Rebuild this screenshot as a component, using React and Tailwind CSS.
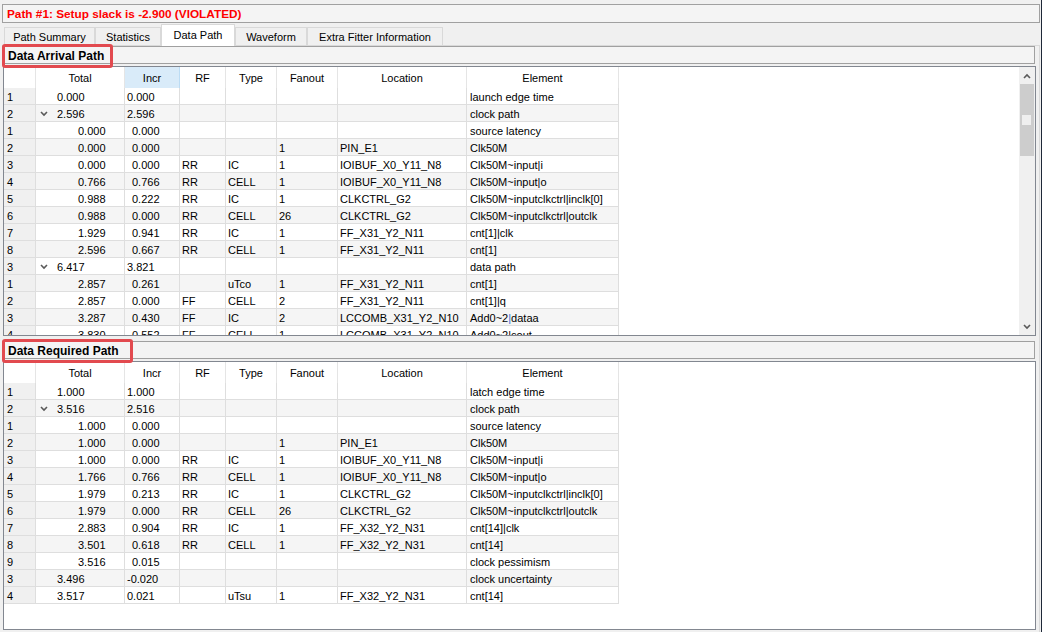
import React from "react";

const arrival = [
  ["1", "0.000", "0.000", "", "", "", "", "launch edge time", 0],
  ["2", "2.596", "2.596", "", "", "", "", "clock path", 0, true],
  ["1", "0.000", "0.000", "", "", "", "", "source latency", 1],
  ["2", "0.000", "0.000", "", "", "1", "PIN_E1", "Clk50M", 1],
  ["3", "0.000", "0.000", "RR", "IC", "1", "IOIBUF_X0_Y11_N8", "Clk50M~input|i", 1],
  ["4", "0.766", "0.766", "RR", "CELL", "1", "IOIBUF_X0_Y11_N8", "Clk50M~input|o", 1],
  ["5", "0.988", "0.222", "RR", "IC", "1", "CLKCTRL_G2", "Clk50M~inputclkctrl|inclk[0]", 1],
  ["6", "0.988", "0.000", "RR", "CELL", "26", "CLKCTRL_G2", "Clk50M~inputclkctrl|outclk", 1],
  ["7", "1.929", "0.941", "RR", "IC", "1", "FF_X31_Y2_N11", "cnt[1]|clk", 1],
  ["8", "2.596", "0.667", "RR", "CELL", "1", "FF_X31_Y2_N11", "cnt[1]", 1],
  ["3", "6.417", "3.821", "", "", "", "", "data path", 0, true],
  ["1", "2.857", "0.261", "", "uTco", "1", "FF_X31_Y2_N11", "cnt[1]", 1],
  ["2", "2.857", "0.000", "FF", "CELL", "2", "FF_X31_Y2_N11", "cnt[1]|q", 1],
  ["3", "3.287", "0.430", "FF", "IC", "2", "LCCOMB_X31_Y2_N10", "Add0~2|dataa", 1],
  ["4", "3.830", "0.552", "FF", "CELL", "1", "LCCOMB_X31_Y2_N10", "Add0~2|cout", 1],
];

const required = [
  ["1", "1.000", "1.000", "", "", "", "", "latch edge time", 0],
  ["2", "3.516", "2.516", "", "", "", "", "clock path", 0, true],
  ["1", "1.000", "0.000", "", "", "", "", "source latency", 1],
  ["2", "1.000", "0.000", "", "", "1", "PIN_E1", "Clk50M", 1],
  ["3", "1.000", "0.000", "RR", "IC", "1", "IOIBUF_X0_Y11_N8", "Clk50M~input|i", 1],
  ["4", "1.766", "0.766", "RR", "CELL", "1", "IOIBUF_X0_Y11_N8", "Clk50M~input|o", 1],
  ["5", "1.979", "0.213", "RR", "IC", "1", "CLKCTRL_G2", "Clk50M~inputclkctrl|inclk[0]", 1],
  ["6", "1.979", "0.000", "RR", "CELL", "26", "CLKCTRL_G2", "Clk50M~inputclkctrl|outclk", 1],
  ["7", "2.883", "0.904", "RR", "IC", "1", "FF_X32_Y2_N31", "cnt[14]|clk", 1],
  ["8", "3.501", "0.618", "RR", "CELL", "1", "FF_X32_Y2_N31", "cnt[14]", 1],
  ["9", "3.516", "0.015", "", "", "", "", "clock pessimism", 1],
  ["3", "3.496", "-0.020", "", "", "", "", "clock uncertainty", 0],
  ["4", "3.517", "0.021", "", "uTsu", "1", "FF_X32_Y2_N31", "cnt[14]", 0],
];

const tabs = [
  ["Path Summary", "w-[91px]"],
  ["Statistics", "w-[66px]"],
  ["Data Path", "w-[74px]"],
  ["Waveform", "w-[72px]"],
  ["Extra Fitter Information", "w-[136px]"],
];

const Chevron = ({ up }) => (
  <svg width="8" height="6" viewBox="0 0 8 6" className="shrink-0">
    <path
      d={up ? "M1 5 L4 2 L7 5" : "M1 1 L4 4 L7 1"}
      fill="none"
      stroke="#5a5a5a"
      strokeWidth="1.6"
    />
  </svg>
);

const Header = ({ blue }) => (
  <div className="flex h-[21px] leading-[21px] text-center overflow-hidden">
    <div className="w-[32px] shrink-0 border-r border-[#e5e5e5] bg-white"></div>
    <div className="w-[89px] shrink-0 border-r border-[#e5e5e5] pt-[1px]">Total</div>
    <div
      className={`w-[55px] shrink-0 border-r pt-[1px] ${
        blue ? "bg-[#d9ebf9] border-[#bcdcf4]" : "border-[#e5e5e5]"
      }`}
    >
      Incr
    </div>
    <div className="w-[46px] shrink-0 border-r border-[#e5e5e5] pt-[1px]">RF</div>
    <div className="w-[51px] shrink-0 border-r border-[#e5e5e5] pt-[1px]">Type</div>
    <div className="w-[61px] shrink-0 border-r border-[#e5e5e5] pt-[1px]">Fanout</div>
    <div className="w-[129px] shrink-0 border-r border-[#e5e5e5] pt-[1px]">Location</div>
    <div className="w-[152px] shrink-0 border-r border-[#e5e5e5] pt-[1px]">Element</div>
  </div>
);

const Element = ({ text }) => {
  if (text === "Add0~2|dataa") {
    return (
      <>
        Add0~2<span className="text-[#2a6fd6]">|</span>dataa
      </>
    );
  }
  return text;
};

const Row = ({ r, i }) => {
  const [n, total, incr, rf, type, fanout, loc, el, level, expand] = r;
  const bg = i % 2 === 1 ? "bg-[#f5f5f5]" : "bg-white";
  const cell = `shrink-0 pt-[1px] border-r border-b border-[#dedede] whitespace-nowrap overflow-hidden ${bg}`;
  return (
    <div className="flex h-[17px] leading-[16px]">
      <div className="w-[32px] shrink-0 pt-[1px] overflow-hidden border-r border-b border-[#dedede] bg-[#f0f0f0] pl-[3px]">
        {n}
      </div>
      {expand ? (
        <div className={`w-[89px] flex items-center pl-[4px] ${cell}`}>
          <Chevron />
          <span className="ml-[9px]">{total}</span>
        </div>
      ) : (
        <div className={`w-[89px] ${level ? "pl-[42px]" : "pl-[21px]"} ${cell}`}>{total}</div>
      )}
      <div className={`w-[55px] ${level ? "pl-[7px]" : "pl-[2px]"} ${cell}`}>{incr}</div>
      <div className={`w-[46px] pl-[2px] ${cell}`}>{rf}</div>
      <div className={`w-[51px] pl-[2px] ${cell}`}>{type}</div>
      <div className={`w-[61px] pl-[2px] ${cell}`}>{fanout}</div>
      <div className={`w-[129px] pl-[2px] ${cell}`}>{loc}</div>
      <div className={`w-[152px] pl-[3px] ${cell}`}>
        <Element text={el} />
      </div>
    </div>
  );
};

const SectionTitle = ({ title, mark }) => (
  <div className="relative h-[18px] w-[1032px] border border-[#a0a0a0] bg-[#f4f4f4] pl-[4px] pt-[2px] flex items-center font-bold text-[12px]">
    {title}
    <div className={`absolute -left-[2px] -top-[3px] h-[24px] ${mark} z-10 border-[3px] border-[#e24a4f] rounded-[3px]`}></div>
  </div>
);

export default function App() {
  return (
    <div className="flex w-[1042px] h-[632px] overflow-hidden bg-[#f0f0f0] text-[11px] text-black font-['Liberation_Sans',Arial,sans-serif]">
      <div className="w-[1041px] flex flex-col">
        <div className="mt-[4px] ml-[2px] w-[1038px] h-[19px] border border-[#a0a0a0] bg-[#f4f4f4] pl-[4px] pt-[2px] flex items-center font-bold text-[11.8px] text-[#ff0000]">
          Path #1: Setup slack is -2.900 (VIOLATED)
        </div>

        <div className="flex items-end h-[22px] ml-[4px] relative z-[1]">
          {tabs.map(([t, w]) =>
            t === "Data Path" ? (
              <div
                key={t}
                className={`${w} h-[22px] -mb-px bg-white border border-b-0 border-[#d9d9d9] flex items-center justify-center`}
              >
                {t}
              </div>
            ) : (
              <div
                key={t}
                className={`${w} h-[18px] pt-[2px] bg-[#f0f0f0] border border-b-0 border-[#d9d9d9] flex items-center justify-center`}
              >
                {t}
              </div>
            )
          )}
        </div>

        <div className="ml-[2px] w-[1038px] flex-1 border-t border-r border-[#d9d9d9] pl-[1px] flex flex-col">
          <SectionTitle title="Data Arrival Path" mark="w-[111px]" />
          <div className="mt-[2px] w-[1033px] h-[270px] border border-[#828790] bg-white flex overflow-hidden">
            <div className="flex-1 overflow-hidden">
              <Header blue />
              {arrival.map((r, i) => (
                <Row key={i} r={r} i={i} />
              ))}
            </div>
            <div className="w-[16px] bg-[#f0f0f0] flex flex-col items-stretch">
              <div className="h-[17px] flex items-center justify-center">
                <Chevron up />
              </div>
              <div className="h-[72px] mx-[1px] bg-[#cdcdcd] pt-[31px] pl-[2px]">
                <div className="w-[9px] h-[10px] bg-[#efefef]"></div>
              </div>
              <div className="flex-1"></div>
              <div className="h-[17px] flex items-center justify-center">
                <Chevron />
              </div>
            </div>
          </div>

          <div className="mt-[5px]">
            <SectionTitle title="Data Required Path" mark="w-[131px]" />
          </div>
          <div className="mt-[2px] w-[1033px] h-[269px] border border-[#828790] bg-white overflow-hidden">
            <Header />
            {required.map((r, i) => (
              <Row key={i} r={r} i={i} />
            ))}
          </div>
        </div>
      </div>
      <div className="w-[1px] bg-[#1e2838]"></div>
    </div>
  );
}
